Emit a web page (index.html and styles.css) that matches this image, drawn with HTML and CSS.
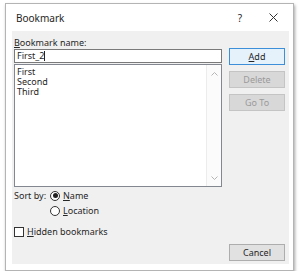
FILE: index.html
```html
<!DOCTYPE html>
<html lang="en">
<head>
    <meta charset="UTF-8">
    <title>Bookmark</title>
    <link rel="stylesheet" href="styles.css">
</head>
<body>
    <div class="window">
        <div class="titlebar">
            <span class="title">Bookmark</span>
            <span class="help">?</span>
            <svg class="close" width="9" height="9" viewBox="0 0 9 9">
                <path d="M0.5 0.5 L8.5 8.5 M8.5 0.5 L0.5 8.5" stroke="#333" stroke-width="1" fill="none"/>
            </svg>
        </div>

        <div class="content">
            <div class="label"><u>B</u>ookmark name:</div>
            <div class="main">
                <div class="left">
                    <div class="input">First_2<span class="caret"></span></div>
                    <div class="list">
                        <div class="items">
                            <div>First</div>
                            <div>Second</div>
                            <div>Third</div>
                        </div>
                        <div class="scrollbar">
                            <svg width="7" height="4" viewBox="0 0 7 4"><path d="M0.5 3.5 L3.5 0.5 L6.5 3.5" stroke="#b5b5b5" fill="none"/></svg>
                            <svg width="7" height="4" viewBox="0 0 7 4"><path d="M0.5 0.5 L3.5 3.5 L6.5 0.5" stroke="#b5b5b5" fill="none"/></svg>
                        </div>
                    </div>

                    <div class="sort">
                        <span class="sort-label">Sort by:</span>
                        <div class="radios">
                            <div class="option"><span class="radio checked"></span><u>N</u>ame</div>
                            <div class="option"><span class="radio"></span><u>L</u>ocation</div>
                        </div>
                    </div>

                    <div class="option check-row"><span class="checkbox"></span><u>H</u>idden bookmarks</div>
                </div>

                <div class="right">
                    <div class="btn default"><u>A</u>dd</div>
                    <div class="btn disabled">Delete</div>
                    <div class="btn disabled">Go To</div>
                    <div class="btn cancel">Cancel</div>
                </div>
            </div>
        </div>
    </div>
</body>
</html>
```

FILE: styles.css
```css
html, body {
    margin: 0;
    padding: 0;
    background: #fff;
}
body {
    font-family: "Noto Sans", "Open Sans", sans-serif;
    font-size: 9px;
    color: #262626;
}
.window {
    box-sizing: border-box;
    margin: 3px 0 0 5px;
    width: 289px;
    height: 268px;
    border: 1px solid #b4b4b4;
    box-shadow: 1px 2px 3px rgba(0, 0, 0, 0.35);
    background: #fff;
    padding: 0 4px 6px 6px;
    display: flex;
    flex-direction: column;
}
.titlebar {
    height: 27px;
    display: flex;
    align-items: center;
    font-size: 10px;
}
.title {
    margin-left: 4px;
    flex: 1;
}
.help {
    margin-right: 27px;
}
.close {
    margin-right: 11px;
}
.content {
    flex: 1;
    background: #f0f0f0;
    padding: 7px 3px 3px 2px;
    display: flex;
    flex-direction: column;
}
.label {
    height: 10px;
    line-height: 10px;
}
.main {
    flex: 1;
    display: flex;
    gap: 7px;
}
.left {
    width: 208px;
    display: flex;
    flex-direction: column;
}
.input {
    box-sizing: border-box;
    height: 14px;
    margin-top: 1px;
    border: 1px solid #7a7a7a;
    background: #fff;
    padding-left: 2px;
    line-height: 12px;
    display: flex;
    align-items: center;
}
.caret {
    width: 1px;
    height: 10px;
    background: #222;
}
.list {
    box-sizing: border-box;
    height: 123px;
    margin-top: 1px;
    border: 1px solid #828790;
    background: #fff;
    display: flex;
}
.items {
    flex: 1;
    padding: 2px 2px;
    line-height: 10px;
}
.items div {
    height: 10px;
}
.scrollbar {
    width: 14px;
    border-left: 1px solid #ececec;
    background: #fbfbfb;
    display: flex;
    flex-direction: column;
    justify-content: space-between;
    align-items: center;
    padding: 7px 0 6px;
}
.sort {
    display: flex;
    margin-top: 1px;
}
.sort-label {
    width: 36px;
    line-height: 15px;
}
.radios {
    display: flex;
    flex-direction: column;
}
.option {
    display: flex;
    align-items: center;
    height: 15px;
}
.radio {
    box-sizing: border-box;
    width: 10px;
    height: 10px;
    border: 1px solid #333;
    border-radius: 50%;
    background: #fff;
    margin-right: 3px;
    display: flex;
    align-items: center;
    justify-content: center;
}
.radio.checked::after {
    content: "";
    width: 5px;
    height: 5px;
    border-radius: 50%;
    background: #222;
}
.check-row {
    margin-top: 6px;
}
.checkbox {
    box-sizing: border-box;
    width: 10px;
    height: 10px;
    border: 1px solid #333;
    background: #fff;
    margin-right: 3px;
}
.right {
    width: 56px;
    display: flex;
    flex-direction: column;
    gap: 6px;
}
.btn {
    box-sizing: border-box;
    height: 17px;
    line-height: 15px;
    text-align: center;
    border: 1px solid #adadad;
    background: #e1e1e1;
}
.btn.default {
    border-color: #3c8fd8;
    background: #e5f1fb;
}
.btn.disabled {
    color: #9a9a9a;
    border-color: #c4c4c4;
    background: #d8d8d8;
}
.btn.cancel {
    margin-top: auto;
}
```
